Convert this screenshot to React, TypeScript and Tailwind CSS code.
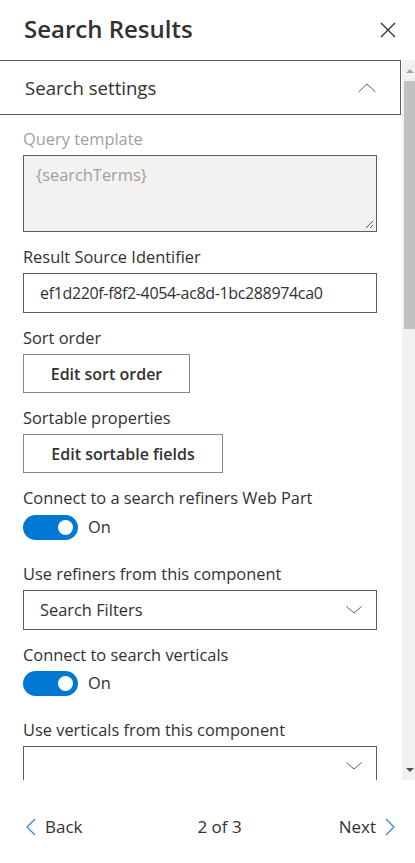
import { ReactNode } from "react";

const font = { fontFamily: '"Open Sans", "Noto Sans", Arial, sans-serif' };

const Label = ({ text, disabled }: { text: string; disabled?: boolean }) => (
  <div className={`h-6 leading-6 text-[16.4px] mb-[4px] ${disabled ? "text-[#a19f9d]" : "text-[#323130]"}`}>
    {text}
  </div>
);

const ChevronDown = () => (
  <svg width="16" height="8" viewBox="0 0 16 8" fill="none">
    <path d="M0.5 0.5 L8 7 L15.5 0.5" stroke="#605e5c" strokeWidth="1" />
  </svg>
);

const Dropdown = ({ value }: { value: string }) => (
  <div className="h-[40px] border border-[#605e5c] flex items-center justify-between pl-4 pr-[14px] text-[16.4px] text-[#323130]">
    <span>{value}</span>
    <ChevronDown />
  </div>
);

const Toggle = () => (
  <div className="flex items-center gap-[10px]">
    <div className="w-[55px] h-[25px] rounded-full bg-[#0078d4] flex items-center justify-end pr-[5px]">
      <div className="w-[15px] h-[15px] rounded-full bg-white" />
    </div>
    <span className="text-[16.4px] text-[#323130]">On</span>
  </div>
);

const Button = ({ children, width }: { children: ReactNode; width: string }) => (
  <div className={`${width} h-[39px] border border-[#8a8886] flex items-center justify-center text-[16px] font-semibold text-[#323130]`}>
    {children}
  </div>
);

export default function App() {
  return (
    <div style={font} className="w-[415px] h-[863px] bg-white flex flex-col overflow-hidden text-[#323130]">
      {/* pane title */}
      <div className="h-[60px] flex items-start justify-between pl-6 pr-[19px] pt-[13px]">
        <h1 className="text-[24px] font-semibold leading-8 text-[#323130]">Search Results</h1>
        <svg width="16" height="16" viewBox="0 0 16 16" className="mt-[9px]">
          <path d="M1 1 L15 15 M15 1 L1 15" stroke="#323130" strokeWidth="1.3" />
        </svg>
      </div>

      <div className="h-[720px] flex">
        {/* scrolling content */}
        <div className="w-[402px] overflow-hidden">
          <div className="-ml-px w-[402px] h-[55px] border border-[#605e5c] flex items-center justify-between pl-[25px] pr-[24px]">
            <span className="text-[18.6px] text-[#323130]">Search settings</span>
            <svg width="18" height="10" viewBox="0 0 18 10" fill="none">
              <path d="M0.5 9 L9 1 L17.5 9" stroke="#605e5c" strokeWidth="1" />
            </svg>
          </div>

          <div className="pl-[23px] pr-[25px] pt-[12px]">
            <div className="mb-[13px]">
              <Label text="Query template" disabled />
              <div className="relative h-[77px] border border-[#605e5c] bg-[#f3f2f1] px-3 pt-[7px] text-[16.4px] text-[#a19f9d]">
                {"{searchTerms}"}
                <svg width="10" height="10" viewBox="0 0 10 10" className="absolute right-[2px] bottom-[2px]">
                  <path d="M9 2 L2 9 M9 6 L6 9" stroke="#605e5c" strokeWidth="1" />
                </svg>
              </div>
            </div>

            <div className="mb-[13px]">
              <Label text="Result Source Identifier" />
              <div className="h-[40px] border border-[#605e5c] flex items-center pl-4 text-[16px] tracking-[-0.35px] text-[#323130]">
                ef1d220f-f8f2-4054-ac8d-1bc288974ca0
              </div>
            </div>

            <div className="mb-[13px]">
              <Label text="Sort order" />
              <Button width="w-[167px]">Edit sort order</Button>
            </div>

            <div className="mb-[13px]">
              <Label text="Sortable properties" />
              <Button width="w-[200px]">Edit sortable fields</Button>
            </div>

            <div className="mb-[22px]">
              <div className="h-6 leading-6 text-[16.4px] mb-[5px]">Connect to a search refiners Web Part</div>
              <Toggle />
            </div>

            <div className="mb-[13px]">
              <Label text="Use refiners from this component" />
              <Dropdown value="Search Filters" />
            </div>

            <div className="mb-[22px]">
              <div className="h-6 leading-6 text-[16.4px] mb-[4px]">Connect to search verticals</div>
              <Toggle />
            </div>

            <div>
              <Label text="Use verticals from this component" />
              <Dropdown value="" />
            </div>
          </div>
        </div>

        {/* scrollbar */}
        <div className="w-[13px] bg-[#f1f1f1] flex flex-col items-center">
          <div className="h-[21px] flex items-center justify-center pl-[2px]">
            <div className="w-0 h-0 border-l-[4px] border-r-[4px] border-b-[4px] border-l-transparent border-r-transparent border-b-[#a3a3a3]" />
          </div>
          <div className="ml-[2px] w-[11px] h-[248px] bg-[#c1c1c1]" />
          <div className="flex-1" />
          <div className="h-[21px] flex items-center justify-center pl-[2px]">
            <div className="w-0 h-0 border-l-[4px] border-r-[4px] border-t-[4px] border-l-transparent border-r-transparent border-t-[#505050]" />
          </div>
        </div>
      </div>

      {/* wizard footer */}
      <div className="flex-1 flex items-start justify-between pl-[26px] pr-[20px] pt-[34px] text-[17px] text-[#323130]">
        <div className="flex items-center gap-[9px]">
          <svg width="10" height="18" viewBox="0 0 10 18" fill="none">
            <path d="M9 1 L1 9 L9 17" stroke="#2b88d8" strokeWidth="1.2" />
          </svg>
          <span>Back</span>
        </div>
        <span className="ml-[18px]">2 of 3</span>
        <div className="flex items-center gap-[9px]">
          <span>Next</span>
          <svg width="10" height="18" viewBox="0 0 10 18" fill="none">
            <path d="M1 1 L9 9 L1 17" stroke="#2b88d8" strokeWidth="1.2" />
          </svg>
        </div>
      </div>
    </div>
  );
}
